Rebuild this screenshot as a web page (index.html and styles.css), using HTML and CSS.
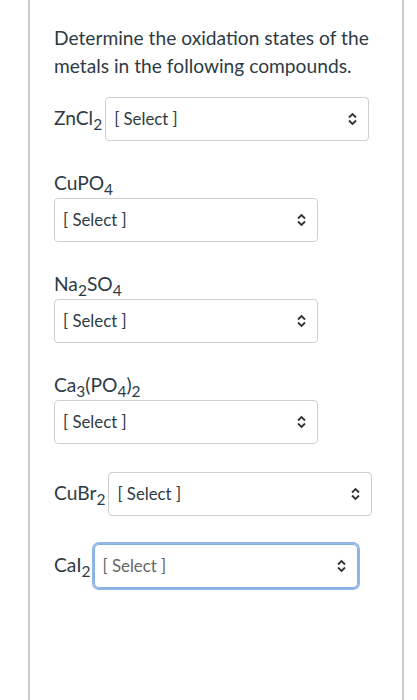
FILE: index.html
```html
<!DOCTYPE html>
<html>
<head>
    <title>Oxidation States</title>
    <meta charset="UTF-8">
    <link rel="stylesheet" href="styles.css">
</head>
<body>
    <div class="card">
        <p class="prompt">Determine the oxidation states of the metals in the following compounds.</p>

        <div class="item inline">
            <span class="formula">ZnCl<sub>2</sub></span>
            <div class="select"><span>[ Select ]</span><svg class="caret" viewBox="0 0 9 14"><polyline points="1,5.5 4.5,2 8,5.5"/><polyline points="1,8.5 4.5,12 8,8.5"/></svg></div>
        </div>

        <div class="item stacked">
            <span class="formula">CuPO<sub>4</sub></span>
            <div class="select"><span>[ Select ]</span><svg class="caret" viewBox="0 0 9 14"><polyline points="1,5.5 4.5,2 8,5.5"/><polyline points="1,8.5 4.5,12 8,8.5"/></svg></div>
        </div>

        <div class="item stacked">
            <span class="formula">Na<sub>2</sub>SO<sub>4</sub></span>
            <div class="select"><span>[ Select ]</span><svg class="caret" viewBox="0 0 9 14"><polyline points="1,5.5 4.5,2 8,5.5"/><polyline points="1,8.5 4.5,12 8,8.5"/></svg></div>
        </div>

        <div class="item stacked">
            <span class="formula">Ca<sub>3</sub>(PO<sub>4</sub>)<sub>2</sub></span>
            <div class="select"><span>[ Select ]</span><svg class="caret" viewBox="0 0 9 14"><polyline points="1,5.5 4.5,2 8,5.5"/><polyline points="1,8.5 4.5,12 8,8.5"/></svg></div>
        </div>

        <div class="item inline">
            <span class="formula">CuBr<sub>2</sub></span>
            <div class="select"><span>[ Select ]</span><svg class="caret" viewBox="0 0 9 14"><polyline points="1,5.5 4.5,2 8,5.5"/><polyline points="1,8.5 4.5,12 8,8.5"/></svg></div>
        </div>

        <div class="item inline">
            <span class="formula">CaI<sub>2</sub></span>
            <div class="select focused"><span>[ Select ]</span><svg class="caret" viewBox="0 0 9 14"><polyline points="1,5.5 4.5,2 8,5.5"/><polyline points="1,8.5 4.5,12 8,8.5"/></svg></div>
        </div>
    </div>
</body>
</html>
```

FILE: styles.css
```css
:root {
    --text: #2d3b45;
    --border: #cfcfcf;
    --focus: #93b7e5;
}

* {
    margin: 0;
    padding: 0;
    box-sizing: border-box;
}

body {
    background: #fff;
    color: var(--text);
    font-family: Lato, 'Open Sans', sans-serif;
}

.card {
    margin-left: 28px;
    width: 376px;
    height: 700px;
    border-left: 2px solid #cbcbcb;
    border-right: 2px solid #cbcbcb;
    padding: 24px 24px 0;
}

.prompt {
    font-size: 19.2px;
    line-height: 28px;
    margin-bottom: 17px;
}

.item {
    font-size: 19.2px;
    line-height: 28px;
    margin-bottom: 28px;
}

.item.inline {
    display: flex;
    align-items: baseline;
    gap: 3px;
}

.item.stacked .select {
    margin-top: 1px;
}

.formula sub {
    font-size: 15.5px;
    line-height: 0;
    vertical-align: -5px;
}

.select {
    width: 264px;
    height: 44px;
    border: 1px solid var(--border);
    border-radius: 4px;
    display: flex;
    align-items: center;
    justify-content: space-between;
    padding: 0 11px 0 8px;
    font-size: 16.8px;
    color: var(--text);
}

.select.focused {
    border-color: #86aee0;
    box-shadow: 0 0 0 2px var(--focus);
    border-radius: 5px;
    color: #666;
}

.caret {
    width: 9px;
    height: 14px;
    fill: none;
    stroke: #333;
    stroke-width: 1.8;
}
```
